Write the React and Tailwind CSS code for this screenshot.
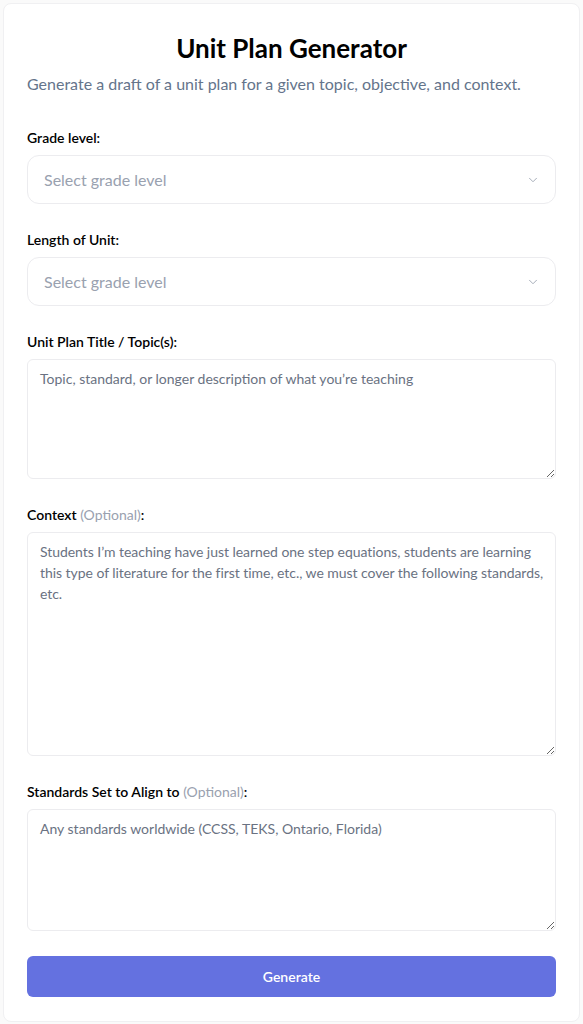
import React from 'react';
import { ChevronDown } from 'lucide-react';

const font = { fontFamily: 'Lato, "Noto Sans", sans-serif' };

function Label({ text, optional }) {
  return (
    <label className="block text-[14px] leading-5 font-semibold text-black mb-[7px]">
      {text}
      {optional && <span className="font-normal text-gray-400"> (Optional)</span>}:
    </label>
  );
}

function SelectBox({ placeholder }) {
  return (
    <div className="h-[49px] w-full rounded-xl border border-[#ececef] bg-white flex items-center justify-between pl-[16px] pr-[15px]">
      <span className="text-[16px] text-gray-400">{placeholder}</span>
      <ChevronDown className="w-3.5 h-3.5 text-gray-400" strokeWidth={1.5} />
    </div>
  );
}

function Area({ placeholder, h, extra = '' }) {
  return (
    <textarea
      placeholder={placeholder}
      className={`block w-full ${h} rounded-md border border-[#ececef] bg-white pl-3 pr-3 py-2 text-[14px] leading-[21px] text-gray-700 placeholder:text-gray-500 focus:outline-none ${extra}`}
      style={font}
    />
  );
}

export default function App() {
  return (
    <div className="min-h-screen bg-[#fafafa] p-[3px]" style={font}>
      <div className="bg-white rounded-lg border border-[#f0f0f2] px-[23px] pt-7 pb-6">
        <h1 className="text-center text-[26px] leading-8 font-bold text-black">Unit Plan Generator</h1>
        <p className="mt-2 text-[16px] leading-6 text-[#64748b]">
          Generate a draft of a unit plan for a given topic, objective, and context.
        </p>

        <div className="mt-8">
          <Label text="Grade level" />
          <SelectBox placeholder="Select grade level" />
        </div>

        <div className="mt-[26px]">
          <Label text="Length of Unit" />
          <SelectBox placeholder="Select grade level" />
        </div>

        <div className="mt-[26px]">
          <Label text="Unit Plan Title / Topic(s)" />
          <Area h="h-[120px]" placeholder="Topic, standard, or longer description of what you’re teaching" />
        </div>

        <div className="mt-[26px]">
          <Label text="Context" optional />
          <Area
            h="h-[224px]"
            extra="!pr-1 tracking-[-0.05px]"
            placeholder={'Students I’m teaching have just learned one step equations, students are learning\nthis type of literature for the first time, etc., we must cover the following standards,\netc.'}
          />
        </div>

        <div className="mt-[26px]">
          <Label text="Standards Set to Align to" optional />
          <Area h="h-[122px]" placeholder="Any standards worldwide (CCSS, TEKS, Ontario, Florida)" />
        </div>

        <button className="mt-[25px] w-full h-[41px] rounded-md bg-[#6471e0] text-white text-[14px] font-semibold">
          Generate
        </button>
      </div>
    </div>
  );
}
